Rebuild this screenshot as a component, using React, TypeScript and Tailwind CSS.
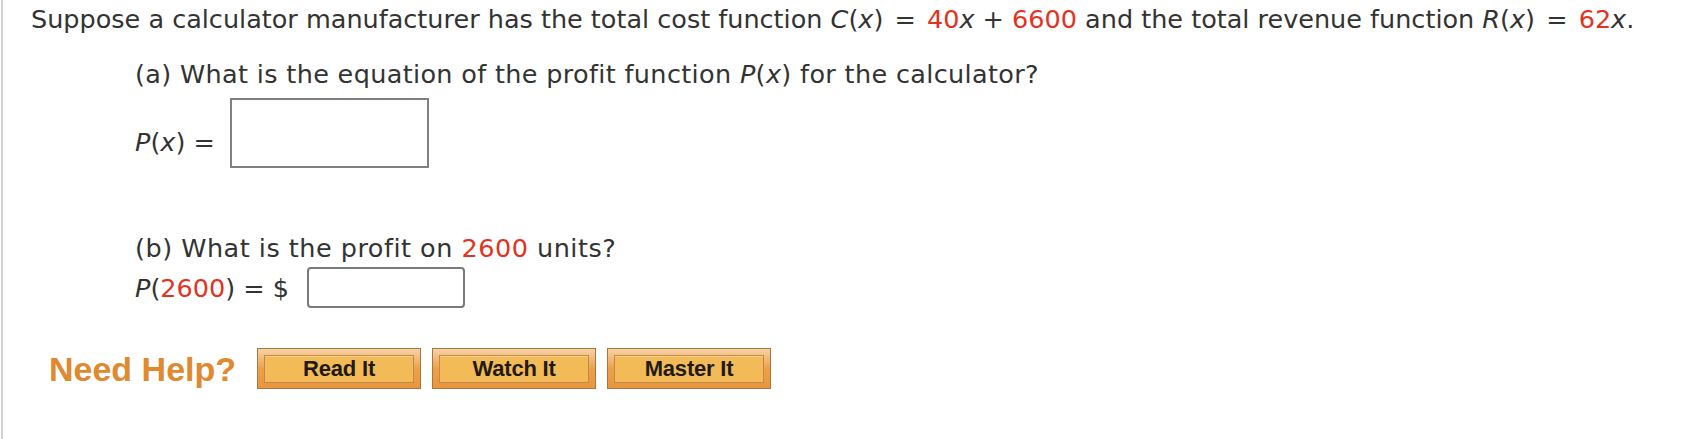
import React from "react";

const R = ({ children }: { children: React.ReactNode }) => (
  <span className="text-[#e5311f]">{children}</span>
);
const I = ({ children }: { children: React.ReactNode }) => (
  <span className="italic">{children}</span>
);
const Eq = () => <span className="px-[3px]">=</span>;

function HelpButton({ label }: { label: string }) {
  return (
    <div className="w-[164px] h-[41px] border border-[#a8773f] bg-gradient-to-b from-[#f6d2a4] via-[#eea048] to-[#e9963e] p-[6px] pb-[5px]">
      <div className="h-full border border-[#c0894e] bg-[#f2bb58] shadow-[inset_0_1px_0_#f7d08a] flex items-center justify-center">
        <span className="font-['Liberation_Sans',Arial,sans-serif] font-bold text-[22px] leading-none text-[#221a0e] tracking-[-0.2px]">
          {label}
        </span>
      </div>
    </div>
  );
}

export default function App() {
  return (
    <div className="w-[1699px] h-[439px] bg-white overflow-hidden">
      <div className="ml-[1px] h-full border-l-2 border-[#d0d0d0] pl-[28px] pt-[3px] font-['DejaVu_Sans',Verdana,sans-serif] text-[25.5px] leading-[32px] text-[#333333]">
        <div className="whitespace-nowrap">
          Suppose a calculator manufacturer has the total cost function <I>C</I>(<I>x</I>) <Eq /> <R>40</R><I>x</I> + <R>6600</R> and the total revenue function <I>R</I>(<I>x</I>) <Eq /> <R>62</R><I>x</I>.
        </div>
        <div className="ml-[104px] mt-[23px] whitespace-nowrap tracking-[0.34px]">
          (a) What is the equation of the profit function <I>P</I>(<I>x</I>) for the calculator?
        </div>
        <div className="ml-[104px] mt-[8px] flex items-end">
          <span className="w-[95px] shrink-0 mb-[10px] whitespace-nowrap">
            <I>P</I>(<I>x</I>) =
          </span>
          <div className="w-[199px] h-[70px] border-2 border-[#808080] bg-white" />
        </div>
        <div className="ml-[104px] mt-[64px] whitespace-nowrap tracking-[0.5px]">
          (b) What is the profit on <R>2600</R> units?
        </div>
        <div className="ml-[104px] mt-[3px] flex items-end">
          <span className="w-[172px] shrink-0 mb-[4px] whitespace-nowrap">
            <I>P</I>(<R>2600</R>) = $
          </span>
          <div className="w-[158px] h-[41px] border-2 border-[#7a7a7a] rounded-[4px] bg-white" />
        </div>
        <div className="ml-[18px] mt-[40px] flex items-center">
          <span className="font-['Liberation_Sans',Arial,sans-serif] font-bold text-[34px] leading-none text-[#e0892e] whitespace-nowrap">
            Need Help?
          </span>
          <div className="ml-[21px] flex gap-[11px]">
            <HelpButton label="Read It" />
            <HelpButton label="Watch It" />
            <HelpButton label="Master It" />
          </div>
        </div>
      </div>
    </div>
  );
}
